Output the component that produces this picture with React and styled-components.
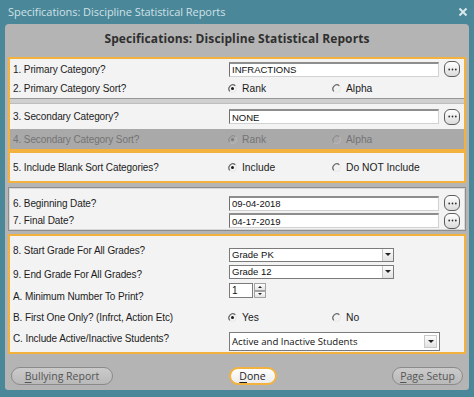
import React from 'react'
import styled, { createGlobalStyle, css } from 'styled-components'

const ORANGE = '#f3b23e'
const UI = '"Open Sans", "DejaVu Sans", sans-serif'
const SANS = '"Liberation Sans", Arial, sans-serif'

const GlobalStyle = createGlobalStyle`
  html, body {
    margin: 0;
    padding: 0;
    background: #4a8799;
  }
  * {
    box-sizing: border-box;
  }
`

const Window = styled.div`
  width: 474px;
  height: 397px;
  background: #4a8799;
  padding: 0 5px 7px;
  display: flex;
  flex-direction: column;
`

const TitleBar = styled.div`
  height: 24px;
  flex-shrink: 0;
  display: flex;
  align-items: center;
  justify-content: space-between;
  padding: 0 1px 1px 3px;
  font-family: ${UI};
  font-size: 11px;
  letter-spacing: -0.05px;
  color: #cfe1e7;
`

const Panel = styled.div`
  flex: 1;
  background: #b4b4b4;
  border-radius: 4px 4px 3px 3px;
  padding: 0 3px;
  display: flex;
  flex-direction: column;
`

const Heading = styled.div`
  height: 29px;
  margin-bottom: 4px;
  display: flex;
  align-items: center;
  justify-content: center;
  font-family: ${UI};
  font-weight: 700;
  font-size: 12px;
  letter-spacing: 0.1px;
  color: #2f2f2f;
`

const Frame = styled.div`
  background: #f3f3f3;
  margin-top: ${p => p.$gap || 0}px;
  padding-top: ${p => p.$pt || 0}px;
  padding-bottom: ${p => p.$pb || 0}px;
  ${p => p.$accent
    ? css`border: 2px solid ${ORANGE};`
    : css`
      border: 1px solid #8d8d8d;
      box-shadow: inset 0 0 0 1px #d8d8d8;
      padding-left: 1px;
      padding-right: 1px;
      padding-top: ${(p.$pt || 0) + 1}px;
      padding-bottom: ${(p.$pb || 0) + 1}px;
    `}
`

const Divider = styled.div`
  height: 6px;
  background: #cfcfcf;
  border-top: 1px solid #979797;
  border-bottom: 1px solid #bdbdbd;
`

const Row = styled.div`
  height: ${p => p.$h}px;
  display: flex;
  align-items: center;
  background: ${p => (p.$disabled ? '#a9a9a9' : 'transparent')};
  color: ${p => (p.$disabled ? '#747474' : '#1c1c1c')};
`

const Label = styled.div`
  width: 219px;
  flex-shrink: 0;
  padding-left: 3px;
  margin-top: ${p => p.$dy || 0}px;
  font-family: ${SANS};
  font-size: 10px;
  letter-spacing: -0.1px;
  white-space: nowrap;
`

const TextBox = styled.div`
  width: 210px;
  height: 15px;
  display: flex;
  align-items: center;
  padding-left: 2px;
  background: #fff;
  border: 1px solid #d2d2d2;
  border-top: 2px solid #8e8e8e;
  border-left: 1px solid #707070;
  font-family: ${SANS};
  font-size: 9.5px;
  color: #111;
`

const DotsButton = styled.div`
  width: 16px;
  height: 16px;
  margin-left: 5px;
  border: 1px solid #5c5c5c;
  border-radius: 6px;
  background: linear-gradient(#ffffff, #dcdcdc);
  display: flex;
  align-items: center;
  justify-content: center;
`

const Options = styled.div`
  display: flex;
  margin-left: -1px;
`

const Option = styled.div`
  width: 104px;
  display: flex;
  align-items: center;
  gap: 5px;
  font-family: ${SANS};
  font-size: 10.3px;
`

const Select = styled.div`
  width: ${p => p.$w}px;
  height: ${p => p.$h}px;
  margin-top: ${p => p.$dy || 0}px;
  display: flex;
  background: #fff;
  border: 1px solid #7b7b7b;
  font-family: ${p => (p.$big ? UI : SANS)};
  font-size: ${p => (p.$big ? '9.6px' : '9.5px')};
  color: #111;
`

const SelectText = styled.div`
  flex: 1;
  display: flex;
  align-items: center;
  padding-left: 2px;
`

const DropButton = styled.div`
  width: ${p => p.$w || 11}px;
  margin: ${p => (p.$inset ? '2px 2px 2px 0' : '0')};
  border-left: 1px solid #c4c4c4;
  ${p => p.$inset && css`border: 1px solid #c9c9c9;`}
  background: linear-gradient(#fcfcfc, #e3e3e3);
  display: flex;
  align-items: center;
  justify-content: center;
`

const Arrow = styled.div`
  width: 0;
  height: 0;
  border-left: ${p => p.$s}px solid transparent;
  border-right: ${p => p.$s}px solid transparent;
  ${p => (p.$up
    ? css`border-bottom: ${p.$s}px solid #222;`
    : css`border-top: ${p.$s}px solid #222;`)}
`

const Spinner = styled.div`
  display: flex;
  height: 15px;
  margin-top: ${p => p.$dy || 0}px;
`

const SpinValue = styled.div`
  width: 24px;
  display: flex;
  align-items: center;
  padding-left: 2px;
  background: #fff;
  border: 1px solid #7b7b7b;
  font-family: ${SANS};
  font-size: 10px;
  color: #111;
`

const SpinButtons = styled.div`
  width: 12px;
  margin-left: 1px;
  display: flex;
  flex-direction: column;
`

const SpinButton = styled.div`
  flex: 1;
  border: 1px solid #a3a3a3;
  background: linear-gradient(#fdfdfd, #e4e4e4);
  display: flex;
  align-items: center;
  justify-content: center;
`

const Footer = styled.div`
  display: flex;
  justify-content: space-between;
  align-items: center;
  padding: 13px 3px 0;
`

const Button = styled.div`
  width: ${p => p.$w}px;
  height: 18px;
  border-radius: 9px;
  display: flex;
  align-items: center;
  justify-content: center;
  font-family: ${UI};
  font-size: 10.5px;
  ${p => (p.$primary
    ? css`
      border: 2px solid ${ORANGE};
      background: linear-gradient(#ffffff, #ececec);
      color: #1e1e1e;
    `
    : css`
      border: 1px solid #8a8a8a;
      background: linear-gradient(#cbcbcb, #b9b9b9);
      color: #555;
    `)}

  u {
    text-decoration-thickness: 1px;
    text-underline-offset: 2px;
  }
`

const Radio = ({ checked, disabled }) => (
  <svg width="9" height="9" viewBox="0 0 9 9">
    <circle cx="4.5" cy="4.5" r="4" fill="none" stroke={disabled ? '#b9b9b9' : '#e6e6e6'} />
    <path
      d="M1.7 7.3 A4 4 0 0 1 7.3 1.7"
      fill="none"
      stroke={disabled ? '#8c8c8c' : '#666'}
      strokeWidth="1.2"
    />
    {checked && <circle cx="4.5" cy="4.5" r="1.5" fill={disabled ? '#7a7a7a' : '#1a1a1a'} />}
  </svg>
)

const Dots = () => (
  <svg width="9" height="3" viewBox="0 0 9 3">
    <circle cx="1.2" cy="1.5" r="0.9" fill="#333" />
    <circle cx="4.5" cy="1.5" r="0.9" fill="#333" />
    <circle cx="7.8" cy="1.5" r="0.9" fill="#333" />
  </svg>
)

const Field = ({ value }) => (
  <>
    <TextBox>{value}</TextBox>
    <DotsButton><Dots /></DotsButton>
  </>
)

const Choice = ({ items, checked = 0, disabled }) => (
  <Options>
    {items.map((text, i) => (
      <Option key={text}>
        <Radio checked={i === checked} disabled={disabled} />
        {text}
      </Option>
    ))}
  </Options>
)

const Dropdown = ({ value, w, h = 14, big, dy }) => (
  <Select $w={w} $h={h} $big={big} $dy={dy}>
    <SelectText>{value}</SelectText>
    <DropButton $w={big ? 13 : 11} $inset={big}>
      <Arrow $s={3} />
    </DropButton>
  </Select>
)

const App = () => (
  <Window>
    <GlobalStyle />
    <TitleBar>
      Specifications: Discipline Statistical Reports
      <svg width="10" height="10" viewBox="0 0 10 10">
        <path d="M1.5 1.5 L8.5 8.5 M8.5 1.5 L1.5 8.5" stroke="#d9e8ed" strokeWidth="2" />
      </svg>
    </TitleBar>
    <Panel>
      <Heading>Specifications: Discipline Statistical Reports</Heading>

      <Frame $accent>
        <Row $h={20}>
          <Label>1. Primary Category?</Label>
          <Field value="INFRACTIONS" />
        </Row>
        <Row $h={19}>
          <Label>2. Primary Category Sort?</Label>
          <Choice items={['Rank', 'Alpha']} />
        </Row>
        <Divider />
        <Row $h={25}>
          <Label>3. Secondary Category?</Label>
          <Field value="NONE" />
        </Row>
        <Row $h={20} $disabled>
          <Label>4. Secondary Category Sort?</Label>
          <Choice items={['Rank', 'Alpha']} disabled />
        </Row>
      </Frame>

      <Frame $accent>
        <Row $h={28}>
          <Label>5. Include Blank Sort Categories?</Label>
          <Choice items={['Include', 'Do NOT Include']} />
        </Row>
      </Frame>

      <Frame $gap={4} $pt={5}>
        <Row $h={18}>
          <Label>6. Beginning Date?</Label>
          <Field value="09-04-2018" />
        </Row>
        <Row $h={17}>
          <Label>7. Final Date?</Label>
          <Field value="04-17-2019" />
        </Row>
      </Frame>

      <Frame $accent $gap={3} $pt={5} $pb={1}>
        <Row $h={22}>
          <Label $dy={-3}>8. Start Grade For All Grades?</Label>
          <Dropdown value="Grade PK" w={165} dy={5} />
        </Row>
        <Row $h={20}>
          <Label $dy={2}>9. End Grade For All Grades?</Label>
          <Dropdown value="Grade 12" w={165} dy={-3} />
        </Row>
        <Row $h={22}>
          <Label $dy={5}>A. Minimum Number To Print?</Label>
          <Spinner $dy={-7}>
            <SpinValue>1</SpinValue>
            <SpinButtons>
              <SpinButton><Arrow $s={2} $up /></SpinButton>
              <SpinButton><Arrow $s={2} /></SpinButton>
            </SpinButtons>
          </Spinner>
        </Row>
        <Row $h={24}>
          <Label>B. First One Only? (Infrct, Action Etc)</Label>
          <Choice items={['Yes', 'No']} />
        </Row>
        <Row $h={22}>
          <Label $dy={-3}>C. Include Active/Inactive Students?</Label>
          <Dropdown value="Active and Inactive Students" w={211} h={19} big dy={2} />
        </Row>
      </Frame>

      <Footer>
        <Button $w={102}><span><u>B</u>ullying Report</span></Button>
        <Button $w={48} $primary><span><u>D</u>one</span></Button>
        <Button $w={71}><span><u>P</u>age Setup</span></Button>
      </Footer>
    </Panel>
  </Window>
)

export default App
